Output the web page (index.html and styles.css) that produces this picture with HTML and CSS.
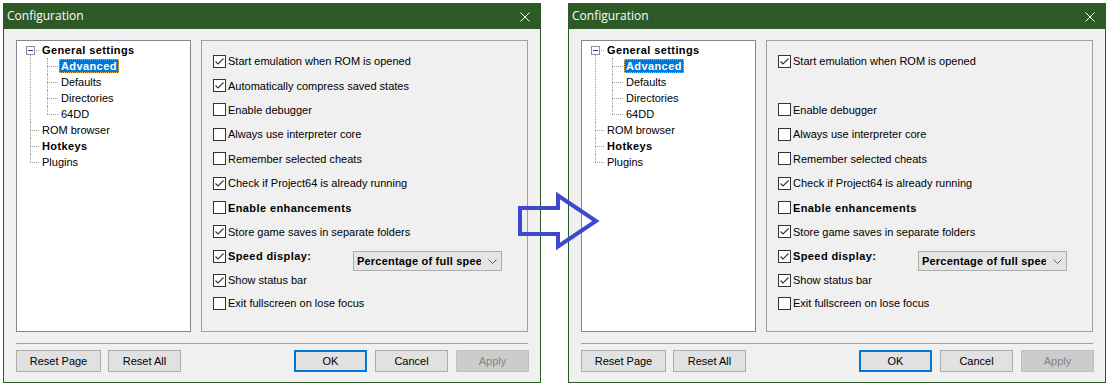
FILE: index.html
```html
<!DOCTYPE html>
<html lang="en">
<head>
    <meta charset="UTF-8">
    <title>Configuration</title>
    <link rel="stylesheet" href="styles.css">
</head>
<body>
    <div class="screen">
        <!-- Before -->
        <div class="dialog">
            <div class="titlebar">
                <span class="title">Configuration</span>
                <svg class="close" width="10" height="10" viewBox="0 0 10 10"><path d="M0.5 0.5L9.5 9.5M9.5 0.5L0.5 9.5" stroke="#fff" stroke-width="1"/></svg>
            </div>
            <div class="content">
                <div class="panes">
                    <div class="tree">
                        <ul class="root">
                            <li class="first">
                                <span class="expander"></span><span class="label bold">General settings</span>
                                <ul class="children">
                                    <li><span class="label bold selected">Advanced</span></li>
                                    <li><span class="label">Defaults</span></li>
                                    <li><span class="label">Directories</span></li>
                                    <li class="last"><span class="label">64DD</span></li>
                                </ul>
                            </li>
                            <li><span class="label">ROM browser</span></li>
                            <li><span class="label bold">Hotkeys</span></li>
                            <li class="last"><span class="label">Plugins</span></li>
                        </ul>
                    </div>
                    <div class="group">
                        <div class="opt"><span class="check on"></span>Start emulation when ROM is opened</div>
                        <div class="opt"><span class="check on"></span>Automatically compress saved states</div>
                        <div class="opt"><span class="check"></span>Enable debugger</div>
                        <div class="opt"><span class="check"></span>Always use interpreter core</div>
                        <div class="opt"><span class="check"></span>Remember selected cheats</div>
                        <div class="opt"><span class="check on"></span>Check if Project64 is already running</div>
                        <div class="opt bold"><span class="check"></span>Enable enhancements</div>
                        <div class="opt"><span class="check on"></span>Store game saves in separate folders</div>
                        <div class="opt bold"><span class="check on"></span><span class="speed-label">Speed display:</span>
                            <div class="combo"><span class="combo-text">Percentage of full speed</span>
                                <svg class="chevron" width="9" height="5" viewBox="0 0 9 5"><path d="M0.5 0.5L4.5 4.5L8.5 0.5" fill="none" stroke="#606060"/></svg>
                            </div>
                        </div>
                        <div class="opt tight"><span class="check on"></span>Show status bar</div>
                        <div class="opt tight"><span class="check"></span>Exit fullscreen on lose focus</div>
                    </div>
                </div>
                <div class="sep"></div>
                <div class="buttons">
                    <button class="wide">Reset Page</button>
                    <button>Reset All</button>
                    <span class="spacer"></span>
                    <button class="default">OK</button>
                    <button>Cancel</button>
                    <button class="disabled">Apply</button>
                </div>
            </div>
        </div>

        <!-- After -->
        <div class="dialog">
            <div class="titlebar">
                <span class="title">Configuration</span>
                <svg class="close" width="10" height="10" viewBox="0 0 10 10"><path d="M0.5 0.5L9.5 9.5M9.5 0.5L0.5 9.5" stroke="#fff" stroke-width="1"/></svg>
            </div>
            <div class="content">
                <div class="panes">
                    <div class="tree">
                        <ul class="root">
                            <li class="first">
                                <span class="expander"></span><span class="label bold">General settings</span>
                                <ul class="children">
                                    <li><span class="label bold selected">Advanced</span></li>
                                    <li><span class="label">Defaults</span></li>
                                    <li><span class="label">Directories</span></li>
                                    <li class="last"><span class="label">64DD</span></li>
                                </ul>
                            </li>
                            <li><span class="label">ROM browser</span></li>
                            <li><span class="label bold">Hotkeys</span></li>
                            <li class="last"><span class="label">Plugins</span></li>
                        </ul>
                    </div>
                    <div class="group">
                        <div class="opt"><span class="check on"></span>Start emulation when ROM is opened</div>
                        <div class="opt"></div>
                        <div class="opt"><span class="check"></span>Enable debugger</div>
                        <div class="opt"><span class="check"></span>Always use interpreter core</div>
                        <div class="opt"><span class="check"></span>Remember selected cheats</div>
                        <div class="opt"><span class="check on"></span>Check if Project64 is already running</div>
                        <div class="opt bold"><span class="check"></span>Enable enhancements</div>
                        <div class="opt"><span class="check on"></span>Store game saves in separate folders</div>
                        <div class="opt bold"><span class="check on"></span><span class="speed-label">Speed display:</span>
                            <div class="combo"><span class="combo-text">Percentage of full speed</span>
                                <svg class="chevron" width="9" height="5" viewBox="0 0 9 5"><path d="M0.5 0.5L4.5 4.5L8.5 0.5" fill="none" stroke="#606060"/></svg>
                            </div>
                        </div>
                        <div class="opt tight"><span class="check on"></span>Show status bar</div>
                        <div class="opt tight"><span class="check"></span>Exit fullscreen on lose focus</div>
                    </div>
                </div>
                <div class="sep"></div>
                <div class="buttons">
                    <button class="wide">Reset Page</button>
                    <button>Reset All</button>
                    <span class="spacer"></span>
                    <button class="default">OK</button>
                    <button>Cancel</button>
                    <button class="disabled">Apply</button>
                </div>
            </div>
        </div>

        <!-- Arrow drawn over both dialogs -->
        <svg class="arrow" width="100" height="70" viewBox="510 188 100 70">
            <polygon points="520,208 558,208 558,195.5 596,221 558,246.5 558,234 520,234" fill="none" stroke="#3f48cc" stroke-width="4"/>
        </svg>
    </div>
</body>
</html>
```

FILE: styles.css
```css
body {
    margin: 0;
    background: #fff;
    font-family: "Liberation Sans", Arial, sans-serif;
    font-size: 11px;
    color: #000;
}

.screen {
    position: relative;
    display: flex;
    gap: 27px;
    padding: 3px 0 0 3px;
}

.dialog {
    width: 538px;
    height: 380px;
    box-sizing: border-box;
    border: 1px solid #2d5a27;
    background: #f0f0f0;
    display: flex;
    flex-direction: column;
}

.titlebar {
    height: 25px;
    background: #2d5a27;
    display: flex;
    align-items: center;
    padding: 0 10px 0 3px;
}

.title {
    flex: 1;
    color: #fff;
    font-family: "Open Sans", "Noto Sans", sans-serif;
    font-size: 12px;
    margin-top: -2px;
}

.close {
    display: block;
    margin-top: 1px;
}

.content {
    flex: 1;
    padding: 11px 12px 0 12px;
    display: flex;
    flex-direction: column;
}

.panes {
    display: flex;
    gap: 10px;
    height: 292px;
}

/* tree view */

.tree {
    width: 175px;
    box-sizing: border-box;
    border: 1px solid #828790;
    background: #fff;
    padding-top: 1px;
}

.tree ul {
    list-style: none;
    margin: 0;
    padding: 0;
}

.tree li {
    position: relative;
    padding-left: 23px;
    line-height: 16px;
}

.tree li::before {
    content: "";
    position: absolute;
    left: 13px;
    top: 8px;
    width: 9px;
    border-top: 1px dotted #a0a0a0;
}

.tree li::after {
    content: "";
    position: absolute;
    left: 13px;
    top: 0;
    bottom: 0;
    border-left: 1px dotted #a0a0a0;
}

.tree li.first::after {
    top: 13px;
}

.tree li.last::after {
    bottom: auto;
    height: 8px;
}

.tree .children li {
    padding-left: 19px;
}

.tree .children li::before {
    left: 7px;
    width: 11px;
}

.tree .children li::after {
    left: 7px;
}

.tree .children li.last::after {
    height: 8px;
}

.label {
    display: inline-block;
    padding: 0 2px;
    line-height: 14px;
    margin: 1px 0;
    white-space: nowrap;
}

.label.selected {
    background: #0078d7;
    color: #fff;
    outline: 1px dotted #f0b050;
    outline-offset: -1px;
}

.expander {
    position: absolute;
    z-index: 1;
    left: 9px;
    top: 4px;
    width: 9px;
    height: 9px;
    box-sizing: border-box;
    border: 1px solid #919191;
    background: #fff;
}

.expander::after {
    content: "";
    position: absolute;
    left: 1px;
    top: 3px;
    width: 5px;
    border-top: 1px solid #1c3f95;
}

.bold {
    font-weight: bold;
    letter-spacing: 0.4px;
}

/* options group */

.group {
    flex: 1;
    box-sizing: border-box;
    border: 1px solid #a0a0a0;
    padding: 8px 11px 0 11px;
}

.opt {
    height: 24.4px;
    display: flex;
    align-items: center;
    white-space: nowrap;
}

.opt.tight {
    height: 23px;
}

.check {
    width: 13px;
    height: 13px;
    box-sizing: border-box;
    border: 1px solid #333;
    background: #fff;
    margin-right: 2px;
    flex: none;
}

.check.on {
    background: #fff url("data:image/svg+xml;utf8,<svg xmlns='http://www.w3.org/2000/svg' width='11' height='11' viewBox='0 0 11 11'><path d='M1.5 5.5L4 8L9.5 2.5' fill='none' stroke='%23333' stroke-width='1.1'/></svg>") no-repeat center;
}

.speed-label {
    width: 125px;
}

.combo {
    align-self: flex-start;
    margin-top: 7px;
    width: 149px;
    height: 20px;
    box-sizing: border-box;
    border: 1px solid #adadad;
    background: #e5e5e5;
    display: flex;
    align-items: center;
    padding: 0 4px 0 3px;
    letter-spacing: 0.2px;
}

.combo-text {
    width: 124px;
    overflow: hidden;
    white-space: nowrap;
}

.chevron {
    margin-left: auto;
}

/* bottom row */

.sep {
    margin-top: 11px;
    border-top: 1px solid #a0a0a0;
}

.buttons {
    display: flex;
    gap: 8px;
    margin-top: 6px;
    margin-right: -1px;
}

.buttons .spacer {
    flex: 1;
}

button {
    width: 73px;
    height: 22px;
    border: 1px solid #adadad;
    background: #e1e1e1;
    font-family: "Liberation Sans", Arial, sans-serif;
    font-size: 11px;
    color: #000;
    padding: 0;
}

button.wide {
    width: 85px;
    margin-right: -1px;
}

button.default {
    border-color: #0078d7;
    box-shadow: inset 0 0 0 1px #0078d7;
}

button.disabled {
    background: #cccccc;
    border-color: #bfbfbf;
    color: #838383;
}

.arrow {
    position: absolute;
    left: 510px;
    top: 188px;
}
```
